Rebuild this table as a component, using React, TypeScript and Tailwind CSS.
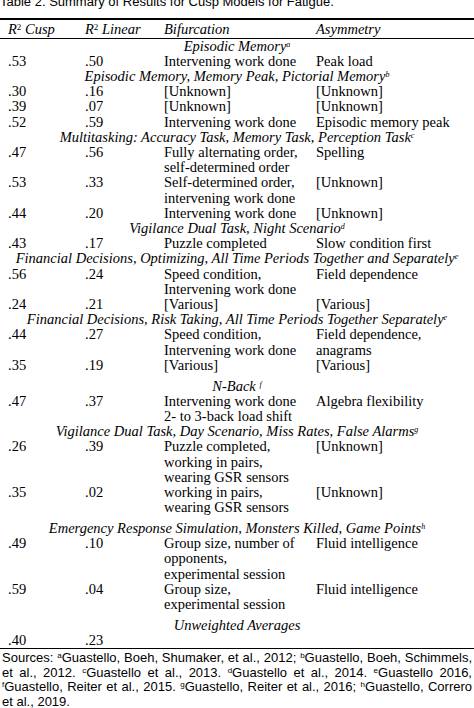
type Row = [string, string, string[], string[]];

type Section = {
  title: string;
  sup?: string;
  gap?: boolean;
  rows: Row[];
};

const sections: Section[] = [
  {
    title: "Episodic Memory",
    sup: "a",
    rows: [[".53", ".50", ["Intervening work done"], ["Peak load"]]],
  },
  {
    title: "Episodic Memory, Memory Peak, Pictorial Memory",
    sup: "b",
    rows: [
      [".30", ".16", ["[Unknown]"], ["[Unknown]"]],
      [".39", ".07", ["[Unknown]"], ["[Unknown]"]],
      [".52", ".59", ["Intervening work done"], ["Episodic memory peak"]],
    ],
  },
  {
    title: "Multitasking: Accuracy Task, Memory Task, Perception Task",
    sup: "c",
    rows: [
      [".47", ".56", ["Fully alternating order,", "self-determined order"], ["Spelling"]],
      [".53", ".33", ["Self-determined order,", "intervening work done"], ["[Unknown]"]],
      [".44", ".20", ["Intervening work done"], ["[Unknown]"]],
    ],
  },
  {
    title: "Vigilance Dual Task, Night Scenario",
    sup: "d",
    rows: [[".43", ".17", ["Puzzle completed"], ["Slow condition first"]]],
  },
  {
    title: "Financial Decisions, Optimizing, All Time Periods Together and Separately",
    sup: "e",
    rows: [
      [".56", ".24", ["Speed condition,", "Intervening work done"], ["Field dependence"]],
      [".24", ".21", ["[Various]"], ["[Various]"]],
    ],
  },
  {
    title: "Financial Decisions, Risk Taking, All Time Periods Together Separately",
    sup: "e",
    rows: [
      [".44", ".27", ["Speed condition,", "Intervening work done"], ["Field dependence,", "anagrams"]],
      [".35", ".19", ["[Various]"], ["[Various]"]],
    ],
  },
  {
    title: "N-Back",
    sup: "f",
    gap: true,
    rows: [[".47", ".37", ["Intervening work done", "2- to 3-back load shift"], ["Algebra flexibility"]]],
  },
  {
    title: "Vigilance Dual Task, Day Scenario, Miss Rates, False Alarms",
    sup: "g",
    rows: [
      [".26", ".39", ["Puzzle completed,", "working in pairs,", "wearing GSR sensors"], ["[Unknown]"]],
      [".35", ".02", ["working in pairs,", "wearing GSR sensors"], ["[Unknown]"]],
    ],
  },
  {
    title: "Emergency Response Simulation, Monsters Killed, Game Points",
    sup: "h",
    gap: true,
    rows: [
      [".49", ".10", ["Group size, number of", "opponents,", "experimental session"], ["Fluid intelligence"]],
      [".59", ".04", ["Group size,", "experimental session"], ["Fluid intelligence"]],
    ],
  },
  {
    title: "Unweighted Averages",
    gap: true,
    rows: [[".40", ".23", [], []]],
  },
];

const Sup = ({ children }: { children: React.ReactNode }) => (
  <sup className="text-[8px]">{children}</sup>
);

const TableRow = ({ row }: { row: Row }) => (
  <div className="grid grid-cols-[77px_79px_152px_1fr] pl-[8px]">
    <div>{row[0]}</div>
    <div>{row[1]}</div>
    <div>
      {row[2].map((line, i) => (
        <div key={i} className="whitespace-nowrap">{line}</div>
      ))}
    </div>
    <div>
      {row[3].map((line, i) => (
        <div key={i} className="whitespace-nowrap">{line}</div>
      ))}
    </div>
  </div>
);

export default function App() {
  return (
    <div className="w-[474px] h-[708px] overflow-hidden bg-white text-black">
      {/* caption, cut off at the top edge */}
      <p className="-mt-[6px] font-['Liberation_Sans',Arial,sans-serif] text-[13px] leading-[15px] whitespace-nowrap">
        Table 2. Summary of Results for Cusp Models for Fatigue.
      </p>

      <div className="mt-[9px] border-t-2 border-black font-['Liberation_Serif','Times_New_Roman',serif] text-[14.5px] leading-[15.2px]">
        <div className="grid grid-cols-[77px_79px_152px_1fr] pl-[8px] pt-[2.4px] border-b border-black italic">
          <div>
            R<sup className="not-italic text-[9px]">2</sup> Cusp
          </div>
          <div>
            R<sup className="not-italic text-[9px]">2</sup> Linear
          </div>
          <div>Bifurcation</div>
          <div>Asymmetry</div>
        </div>

        {sections.map((s, i) => (
          <div key={i} className={s.gap ? "mt-[5.5px]" : ""}>
            <div className="text-center italic whitespace-nowrap">
              {s.title}
              {s.sup && (
                <>
                  {s.title === "N-Back" ? " " : ""}
                  <Sup>{s.sup}</Sup>
                </>
              )}
            </div>
            {s.rows.map((r, j) => (
              <TableRow key={j} row={r} />
            ))}
          </div>
        ))}
      </div>

      <div className="border-t-[1.5px] border-black px-[2px] pt-[2px] font-['Liberation_Sans',Arial,sans-serif] text-[13px] leading-[14.7px]">
        <div className="text-justify [text-align-last:justify]">
          Sources: <Sup>a</Sup>Guastello, Boeh, Shumaker, et al., 2012; <Sup>b</Sup>Guastello, Boeh, Schimmels,
        </div>
        <div className="text-justify [text-align-last:justify]">
          et al., 2012. <Sup>c</Sup>Guastello et al., 2013. <Sup>d</Sup>Guastello et al., 2014. <Sup>e</Sup>Guastello 2016,
        </div>
        <div className="text-justify [text-align-last:justify]">
          <Sup>f</Sup>Guastello, Reiter et al., 2015. <Sup>g</Sup>Guastello, Reiter et al., 2016; <Sup>h</Sup>Guastello, Correro
        </div>
        <div>et al., 2019.</div>
      </div>
    </div>
  );
}
